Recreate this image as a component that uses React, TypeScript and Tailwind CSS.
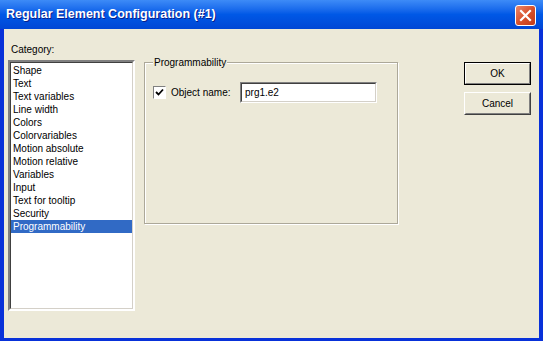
import React, { useState } from "react";

const categories = [
  "Shape",
  "Text",
  "Text variables",
  "Line width",
  "Colors",
  "Colorvariables",
  "Motion absolute",
  "Motion relative",
  "Variables",
  "Input",
  "Text for tooltip",
  "Security",
  "Programmability",
];

export default function App() {
  const [selected, setSelected] = useState("Programmability");
  const [checked, setChecked] = useState(true);
  const [name, setName] = useState("prg1.e2");

  return (
    <div
      className="w-[543px] h-[341px] flex flex-col bg-[#0831D9] text-[10px] text-black overflow-hidden"
      style={{ fontFamily: "'Liberation Sans', Arial, sans-serif" }}
    >
      {/* Title bar */}
      <div className="h-[29px] flex items-center justify-between pl-[6px] pr-[7px] bg-gradient-to-b from-[#3D8BF7] via-[#0058E6] to-[#0046D5]">
        <span className="text-white font-bold text-[12.5px] [text-shadow:1px_1px_0_#0A1E8A]">
          Regular Element Configuration (#1)
        </span>
        <button className="w-[21px] h-[21px] mt-[1px] rounded-[3px] border border-white bg-gradient-to-br from-[#E9876A] via-[#D9512C] to-[#C23A17] flex items-center justify-center">
          <svg width="13" height="13" viewBox="0 0 13 13">
            <path d="M2 2 L11 11 M11 2 L2 11" stroke="white" strokeWidth="2.2" strokeLinecap="square" />
          </svg>
        </button>
      </div>

      {/* Body */}
      <div className="flex-1 mx-[4px] mb-[3px] bg-[#ECE9D8] flex">
        {/* Category column */}
        <div className="ml-[4px] flex flex-col">
          <div className="mt-[14px] h-[13px] leading-[13px] pl-[3px]">Category:</div>
          <div className="mt-[4px] w-[127px] h-[251px] border-2 border-t-[#808080] border-l-[#808080] border-b-white border-r-white">
            <div className="w-full h-full bg-white border border-t-[#404040] border-l-[#404040] border-b-[#D4D0C8] border-r-[#D4D0C8] pt-[1px]">
              {categories.map((c) => (
                <div
                  key={c}
                  onClick={() => setSelected(c)}
                  className={`h-[13px] leading-[13px] pl-[2px] whitespace-nowrap cursor-default ${
                    selected === c ? "bg-[#316AC5] text-white" : ""
                  }`}
                >
                  {c}
                </div>
              ))}
            </div>
          </div>
        </div>

        {/* Group box */}
        <div className="ml-[9px] mt-[33px] w-[254px] h-[162px] relative border border-[#ACA899] shadow-[inset_1px_1px_0_#fff,1px_1px_0_#fff]">
          <span className="absolute -top-[7px] left-[8px] px-[1px] bg-[#ECE9D8] leading-[13px]">Programmability</span>
          <div className="flex items-center mt-[19px] ml-[8px]">
            <label className="flex items-center cursor-default" onClick={() => setChecked(!checked)}>
              <span className="w-[13px] h-[13px] bg-white border border-t-[#808080] border-l-[#808080] border-b-white border-r-white flex items-center justify-center">
                {checked && (
                  <svg width="9" height="9" viewBox="0 0 9 9">
                    <path d="M1 4 L3.5 6.5 L8 1.5" stroke="black" strokeWidth="1.8" fill="none" />
                  </svg>
                )}
              </span>
              <span className="ml-[5px] w-[69px] leading-[13px]">Object name:</span>
            </label>
            <div className="w-[137px] h-[21px] border border-t-[#808080] border-l-[#808080] border-b-white border-r-white">
              <input
                value={name}
                onChange={(e) => setName(e.target.value)}
                className="w-full h-full bg-white border border-t-[#404040] border-l-[#404040] border-b-[#D4D0C8] border-r-[#D4D0C8] px-[3px] outline-none text-[10px]"
              />
            </div>
          </div>
        </div>

        {/* Buttons */}
        <div className="ml-auto mr-[8px] mt-[33px] flex flex-col gap-[7px]">
          <button className="w-[67px] h-[23px] border border-black bg-[#ECE9D8] flex">
            <span className="flex-1 flex items-center justify-center border border-t-white border-l-white border-b-[#808080] border-r-[#808080]">
              OK
            </span>
          </button>
          <button className="w-[67px] h-[23px] border border-t-white border-l-white border-b-[#404040] border-r-[#404040] bg-[#ECE9D8] flex">
            <span className="flex-1 flex items-center justify-center border border-transparent border-b-[#808080] border-r-[#808080]">
              Cancel
            </span>
          </button>
        </div>
      </div>
    </div>
  );
}
